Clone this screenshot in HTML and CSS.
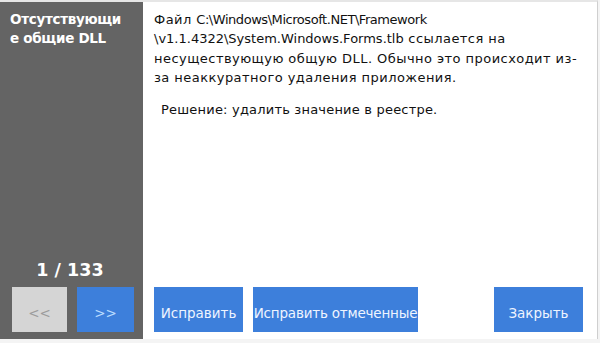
FILE: index.html
```html
<!DOCTYPE html>
<html lang="ru">
<head>
<meta charset="utf-8">
<link rel="stylesheet" href="styles.css">
</head>
<body>
<div class="win">
  <div class="side">
    <div class="title">Отсутствующи<br>е общие DLL</div>
    <div class="counter">1 / 133</div>
    <div class="nav">
      <button class="btn gray">&lt;&lt;</button>
      <button class="btn blue next">&gt;&gt;</button>
    </div>
  </div>
  <div class="main">
    <div class="desc">Файл <span class="path">C:\Windows\Microsoft.NET\Framework</span><br><span class="path2">\v1.1.4322\System.Windows.Forms.tlb</span> ссылается на<br>несуществующую общую DLL. Обычно это происходит из-<br>за неаккуратного удаления приложения.</div>
    <div class="sol">Решение: удалить значение в реестре.</div>
    <div class="actions">
      <button class="btn blue fix">Исправить</button>
      <button class="btn blue fixall">Исправить отмеченные</button>
      <button class="btn blue close">Закрыть</button>
    </div>
  </div>
</div>
</body>
</html>
```
FILE: styles.css
```css
* { box-sizing: border-box; }
html, body { margin: 0; padding: 0; background: #f4f4f4; }
body { width: 600px; height: 343px; overflow: hidden; font-family: "DejaVu Sans", Tahoma, sans-serif; }
.win {
  display: flex;
  width: 598px;
  height: 339px;
  background: #fff;
  border-top: 2px solid #e6e6e6;
  border-right: 1px solid #cfcfcf;
}
.side {
  width: 143px;
  background: #646464;
  display: flex;
  flex-direction: column;
  padding: 8px 9px 7px 12px;
}
.title {
  color: #fff;
  font-weight: bold;
  font-size: 13.5px;
  line-height: 19px;
  margin-left: -2px;
  letter-spacing: -0.3px;
}
.counter {
  margin-top: auto;
  color: #fff;
  font-weight: bold;
  font-size: 17.5px;
  text-align: center;
  margin-bottom: 7px;
  margin-left: -6px;
}
.nav { display: flex; gap: 10px; }
.btn {
  border: none;
  font-family: "DejaVu Sans", Tahoma, sans-serif;
  font-size: 13.5px;
  height: 45px;
  padding: 7px 0 0 0;
  margin: 0;
  white-space: nowrap;
}
.gray { background: #d5d5d5; color: #9c9c9c; width: 55px; }
.blue { background: #3d7fdb; color: #eef4ff; }
.nav .next { width: 57px; color: #b9dcff; }
.main {
  flex: 1;
  display: flex;
  flex-direction: column;
  padding: 8px 14px 7px 11px;
}
.desc {
  color: #111;
  font-size: 13px;
  line-height: 19.3px;
  letter-spacing: 0.45px;
}
.path { letter-spacing: -0.45px; }
.path2 { letter-spacing: 0; }
.sol {
  color: #111;
  font-size: 13px;
  letter-spacing: 0.2px;
  margin-top: 15px;
  margin-left: 7px;
}
.actions {
  margin-top: auto;
  display: flex;
  gap: 10px;
}
.fix { width: 89px; }
.fixall { width: 165px; letter-spacing: -0.2px; }
.close { width: 89px; margin-left: auto; }
```
